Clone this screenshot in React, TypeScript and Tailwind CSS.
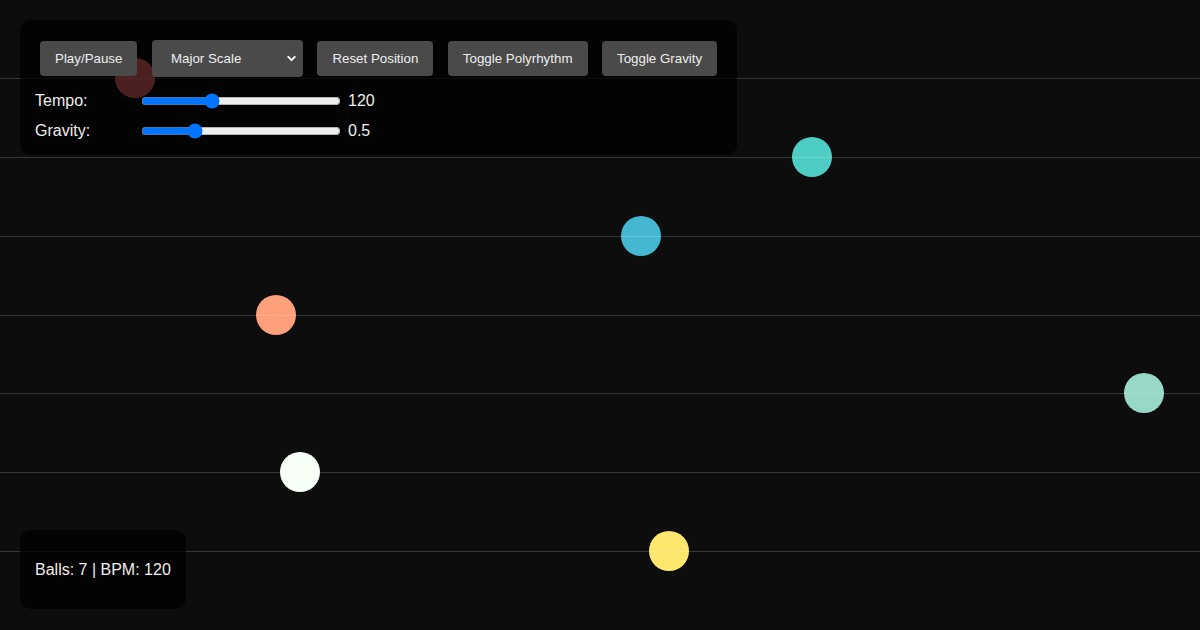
import { ChevronDown } from "lucide-react";

const lines = [
  "top-[78px]",
  "top-[157px]",
  "top-[236px]",
  "top-[315px]",
  "top-[393px]",
  "top-[472px]",
  "top-[551px]",
];

const balls = [
  "left-[115px] top-[58px] bg-[#ff6b6b]",
  "left-[792px] top-[137px] bg-[#4ecdc4]",
  "left-[621px] top-[216px] bg-[#45b7d1]",
  "left-[256px] top-[295px] bg-[#ffa07a]",
  "left-[1124px] top-[373px] bg-[#98d8c8]",
  "left-[280px] top-[452px] bg-[#f7fff7]",
  "left-[649px] top-[531px] bg-[#ffe66d]",
];

function Btn({ children }: { children: React.ReactNode }) {
  return (
    <button className="h-[35px] px-[15px] rounded-[4px] bg-[#4a4a4a] text-[13.333px] leading-[15px] text-[#eee] whitespace-nowrap">
      {children}
    </button>
  );
}

function SliderRow({ label, value, pos }: { label: string; value: string; pos: number }) {
  return (
    <div className="flex items-center h-[30px]">
      <span className="w-[106px] text-[16px] text-[#eee]">{label}</span>
      <input type="range" min={0} max={100} defaultValue={pos} className="w-[200px] m-0" />
      <span className="ml-[7px] text-[16px] text-[#eee]">{value}</span>
    </div>
  );
}

export default function App() {
  return (
    <div className="relative w-full h-[630px] overflow-hidden bg-[#0d0d0d] font-['Liberation_Sans',Arial,sans-serif]">
      {balls.map((b) => (
        <div key={b} className={`absolute w-[40px] h-[40px] rounded-full ${b}`} />
      ))}
      {lines.map((l) => (
        <div key={l} className={`absolute left-0 right-0 h-px bg-white/[0.17] ${l}`} />
      ))}

      {/* control panel */}
      <div className="absolute left-5 top-5 w-[717px] rounded-[10px] bg-black/70 px-[15px] pt-[15px] pb-[9px]">
        <div className="flex items-center gap-[14.5px] h-[47px] pl-[5px]">
          <Btn>Play/Pause</Btn>
          <div className="relative">
            <select className="appearance-none w-[151px] h-[37px] pl-[19px] rounded-[4px] bg-[#4a4a4a] text-[13.333px] text-[#eee]">
              <option>Major Scale</option>
            </select>
            <ChevronDown className="absolute right-[5px] top-[12px] w-[13px] h-[13px] text-white pointer-events-none" strokeWidth={3.5} />
          </div>
          <Btn>Reset Position</Btn>
          <Btn>Toggle Polyrhythm</Btn>
          <Btn>Toggle Gravity</Btn>
        </div>
        <div className="mt-[4px]">
          <SliderRow label="Tempo:" value="120" pos={34} />
          <SliderRow label="Gravity:" value="0.5" pos={25} />
        </div>
      </div>

      {/* stats */}
      <div className="absolute left-5 bottom-[21px] rounded-[10px] bg-black/70 px-[15px] pt-[31px] pb-[30px]">
        <p className="text-[16px] leading-[18px] text-[#eee]">Balls: 7 | BPM: 120</p>
      </div>
    </div>
  );
}
